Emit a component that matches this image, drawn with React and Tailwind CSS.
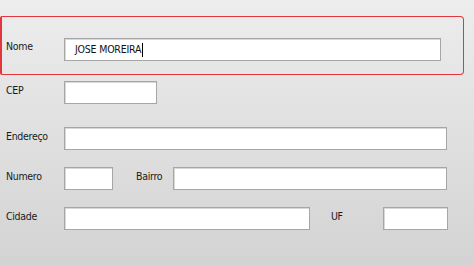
import React from "react";

const font = { fontFamily: '"DejaVu Sans Condensed", "DejaVu Sans", "Liberation Sans", Arial, sans-serif', fontStretch: "semi-condensed" };

function Label({ children, className = "" }) {
  return (
    <div className={"text-[10.5px] leading-none text-[#1a1a1a] tracking-[-0.3px] " + className}>
      {children}
    </div>
  );
}

function Input({ className = "", children }) {
  return (
    <div className={"h-[23px] bg-white border border-[#a6a6a6] shadow-[inset_1px_1px_0_#d8d8d8] flex items-center " + className}>
      {children}
    </div>
  );
}

export default function App() {
  return (
    <div
      style={font}
      className="w-[474px] h-[266px] overflow-hidden bg-gradient-to-b from-[#ededed] to-[#d3d3d3] flex flex-col"
    >
      <div className="mt-[16px] w-[464px] h-[59px] border border-l-2 border-[#e2353d] rounded-r-[4px] rounded-l-[2px] flex items-start">
        <Label className="ml-[4px] mt-[24px] w-[58px]">Nome</Label>
        <Input className="mt-[21px] w-[377px]">
          <span className="ml-[10px] text-[10.5px] leading-none text-[#111] tracking-[-0.2px]">JOSE MOREIRA</span>
          <span className="w-px h-[14px] bg-black ml-px"></span>
        </Input>
      </div>

      <div className="mt-[6px] flex items-start">
        <Label className="ml-[6px] mt-[4px] w-[58px]">CEP</Label>
        <Input className="w-[93px]" />
      </div>

      <div className="mt-[23px] flex items-start">
        <Label className="ml-[6px] mt-[4px] w-[58px]">Endereço</Label>
        <Input className="w-[383px]" />
      </div>

      <div className="mt-[17px] flex items-start">
        <Label className="ml-[6px] mt-[4px] w-[58px]">Numero</Label>
        <Input className="w-[49px]" />
        <Label className="ml-[23px] mt-[4px] w-[37px]">Bairro</Label>
        <Input className="w-[274px]" />
      </div>

      <div className="mt-[17px] flex items-start">
        <Label className="ml-[6px] mt-[4px] w-[58px]">Cidade</Label>
        <Input className="w-[246px]" />
        <Label className="ml-[21px] mt-[4px] w-[52px]">UF</Label>
        <Input className="w-[65px]" />
      </div>
    </div>
  );
}
